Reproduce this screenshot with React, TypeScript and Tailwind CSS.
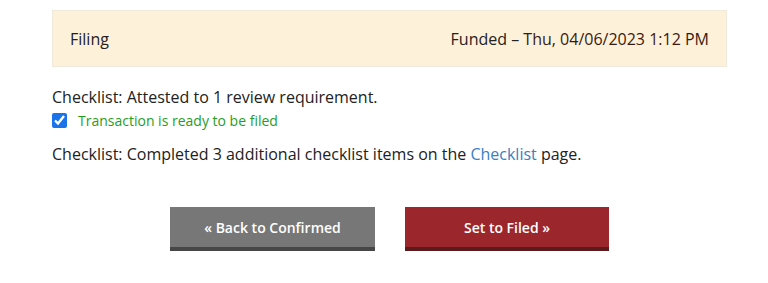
export default function App() {
  return (
    <div className="min-h-screen bg-white text-[#222] font-['Open_Sans',sans-serif] text-[16px]">
      <div className="ml-[52px] w-[675px] pt-[10px]">
        {/* Status banner */}
        <div className="flex h-[57px] items-center justify-between border border-[#f1e9dc] bg-[#fef1da] px-[17px]">
          <span>Filing</span>
          <span>
            Funded – <span className="text-[#3a1a10]">Thu, 04/06/2023 1:12 PM</span>
          </span>
        </div>

        <p className="mt-[18px] leading-[24px]">Checklist: Attested to 1 review requirement.</p>
        <label className="mt-[1px] flex h-[20px] items-center">
          <input type="checkbox" defaultChecked className="m-0 h-[15px] w-[15px] accent-[#1a73e8]" />
          <span className="ml-[11px] text-[14px] text-[#1f9e1f]">Transaction is ready to be filed</span>
        </label>
        <p className="mt-[12px] leading-[24px]">
          Checklist: Completed 3 additional checklist items on the{' '}
          <a href="#" className="text-[#3b7ec2]">Checklist</a> page.
        </p>

        <div className="mt-[41px] flex justify-center gap-[30px]">
          <button className="h-[44px] w-[205px] border-b-4 border-[#474747] bg-[#777777] text-[14px] font-semibold text-white">
            « Back to Confirmed
          </button>
          <button className="h-[44px] w-[204px] border-b-4 border-[#5c1a1d] bg-[#9b262c] text-[14px] font-semibold text-white">
            Set to Filed »
          </button>
        </div>
      </div>
    </div>
  );
}
